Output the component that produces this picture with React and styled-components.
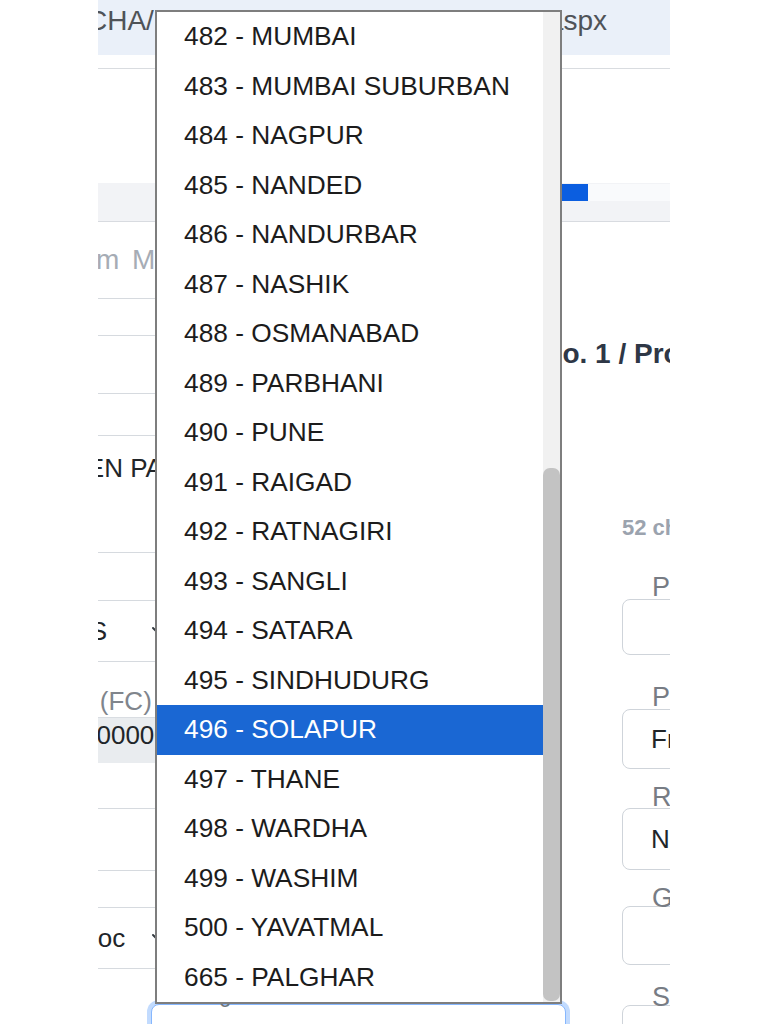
import styled, { createGlobalStyle } from 'styled-components'

const GlobalStyle = createGlobalStyle`
  html, body {
    margin: 0;
    padding: 0;
    background: #fff;
  }
  body {
    font-family: 'Liberation Sans', Arial, sans-serif;
  }
`

const districts = [
  ['482', 'MUMBAI'],
  ['483', 'MUMBAI SUBURBAN'],
  ['484', 'NAGPUR'],
  ['485', 'NANDED'],
  ['486', 'NANDURBAR'],
  ['487', 'NASHIK'],
  ['488', 'OSMANABAD'],
  ['489', 'PARBHANI'],
  ['490', 'PUNE'],
  ['491', 'RAIGAD'],
  ['492', 'RATNAGIRI'],
  ['493', 'SANGLI'],
  ['494', 'SATARA'],
  ['495', 'SINDHUDURG'],
  ['496', 'SOLAPUR'],
  ['497', 'THANE'],
  ['498', 'WARDHA'],
  ['499', 'WASHIM'],
  ['500', 'YAVATMAL'],
  ['665', 'PALGHAR'],
]

const fields = [
  { label: 'Pin Code', value: '', gap: 34, h: 56, lift: 0 },
  { label: 'Profile Type', value: 'Fresh', gap: 30, h: 60, lift: 0 },
  { label: 'Resident of State', value: 'No', gap: 16, h: 62, lift: -1 },
  { label: 'GSTIN', value: '', gap: 16, h: 59, lift: -4 },
  { label: 'State', value: '', gap: 20, h: 60, lift: -4 },
]

const Frame = styled.div`
  position: relative;
  width: 572px;
  height: 1024px;
  margin: 0 auto;
  overflow: hidden;
  background: #fff;
`

const AddressBar = styled.div`
  display: flex;
  justify-content: space-between;
  height: 55px;
  box-sizing: border-box;
  padding: 5px 63px 0 0;
  background: #eaf0f9;
  color: #4f5358;
  font-size: 28px;
  line-height: 32px;
  white-space: nowrap;
`

const UrlPart = styled.span`
  margin-left: ${p => p.$shift || 0}px;
`

const TopRule = styled.div`
  height: 14px;
  box-sizing: border-box;
  border-bottom: 1px solid #d9dce0;
`

const StepBar = styled.div`
  display: flex;
  height: 39px;
  margin-top: 114px;
  box-sizing: border-box;
  padding-top: 1px;
  background: #f2f3f6;
  border-bottom: 1px solid #d8dbe0;
`

const Track = styled.div`
  flex: 1;
  margin-left: 300px;
  height: 17px;
  background: #f9fafc;
`

const Fill = styled.div`
  height: 100%;
  background: #0b5ee0;
`

const Body = styled.div`
  display: grid;
  grid-template-columns: 420px 152px;
`

const LeftCol = styled.div`
  display: flex;
  flex-direction: column;
`

const Row = styled.div`
  display: flex;
  flex-direction: column;
  justify-content: ${p => (p.$top != null ? 'flex-start' : 'center')};
  height: ${p => p.$h}px;
  padding-top: ${p => p.$top || 0}px;
  box-sizing: border-box;
  border-bottom: 1px solid #d6dadf;
  white-space: nowrap;
`

const Title = styled.div`
  margin-left: ${p => p.$shift}px;
  font-size: 28px;
  line-height: 30px;
  word-spacing: 5px;
  color: #a6acb5;
`

const Heading = styled.div`
  padding-left: 284px;
  font-size: 28px;
  font-weight: 700;
  line-height: 30px;
  color: #2e3746;
`

const Value = styled.div`
  margin-left: ${p => p.$shift || 0}px;
  font-size: 26px;
  line-height: 30px;
  color: #212529;
`

const Caption = styled.div`
  margin-left: ${p => p.$shift || 0}px;
  font-size: 26px;
  line-height: 30px;
  color: #80858c;
`

const ReadonlyInput = styled.div`
  height: 46px;
  margin-top: 1px;
  padding-top: 2px;
  box-sizing: border-box;
  background: #e9ecef;
  border-top: 1px solid #d9dde2;
`

const SelectLine = styled.div`
  display: flex;
  align-items: center;
`

const SelectText = styled.div`
  width: 53px;
  flex: none;
  text-indent: ${p => p.$shift}px;
  font-size: 26px;
  line-height: 30px;
  color: #212529;
`

const OriginField = styled.div`
  margin: 14px 0 0 53px;
  width: 415px;
`

const OriginLabel = styled.div`
  padding-left: 39px;
  font-size: 22px;
  line-height: 24px;
  color: #6c757d;
`

const OriginBox = styled.div`
  height: 58px;
  margin-top: -3px;
  box-sizing: border-box;
  border: 1px solid #86b7fe;
  border-radius: 8px;
  background: #fff;
  box-shadow: 0 0 0 4px rgba(13, 110, 253, 0.25);
`

const RightCol = styled.div`
  display: flex;
  flex-direction: column;
  padding-left: 104px;
  white-space: nowrap;
`

const Counter = styled.div`
  margin-top: 293px;
  font-size: 22px;
  font-weight: 700;
  line-height: 26px;
  color: #9ba3ae;
`

const Field = styled.div`
  margin-top: ${p => p.$gap}px;
`

const FieldName = styled.div`
  padding-left: 30px;
  font-size: 27px;
  line-height: 24px;
  color: #777c84;
`

const InputBox = styled.div`
  display: flex;
  align-items: center;
  width: 180px;
  height: ${p => p.$h}px;
  margin-top: ${p => p.$lift}px;
  padding-left: 28px;
  box-sizing: border-box;
  border: 1.5px solid #cfd4da;
  border-radius: 8px;
  font-size: 26px;
  color: #212529;
`

const Popup = styled.div`
  position: absolute;
  top: 10px;
  left: 57px;
  z-index: 5;
  display: flex;
  width: 407px;
  height: 994px;
  box-sizing: border-box;
  border: 2px solid #7e7e7e;
  background: #fff;
`

const OptionList = styled.div`
  flex: 1;
  display: flex;
  flex-direction: column;
`

const Option = styled.div`
  display: flex;
  align-items: center;
  height: 49.5px;
  padding-left: 27px;
  font-size: 26.3px;
  white-space: nowrap;
  color: ${p => (p.$active ? '#fff' : '#1c1c1c')};
  background: ${p => (p.$active ? '#1a67d3' : 'transparent')};
`

const Scrollbar = styled.div`
  display: flex;
  flex-direction: column;
  width: 17px;
  background: #f1f1f1;
`

const Thumb = styled.div`
  flex: 1;
  margin: 456px 0 1px;
  border-radius: 7px;
  background: #c3c3c3;
`

function Chevron() {
  return (
    <svg width="16" height="12" viewBox="0 0 16 12" fill="none">
      <path d="M2 3l6 6 6-6" stroke="#343a40" strokeWidth="2" strokeLinecap="round" strokeLinejoin="round" />
    </svg>
  )
}

export default function App() {
  const progress = 70
  const selected = '496'

  return (
    <>
      <GlobalStyle />
      <Frame>
        <AddressBar>
          <UrlPart $shift={-11}>CHA/Forms</UrlPart>
          <UrlPart>Registration.aspx</UrlPart>
        </AddressBar>
        <TopRule />
        <StepBar>
          <Track>
            <Fill style={{ width: `${progress}%` }} />
          </Track>
        </StepBar>

        <Body>
          <LeftCol>
            <Row $h={77}>
              <Title $shift={-44}>Form Maharashtra</Title>
            </Row>
            <Row $h={37} />
            <Row $h={58} $top={3}>
              <Heading>Application No. 1 / Provisional</Heading>
            </Row>
            <Row $h={42} />
            <Row $h={117} $top={17}>
              <Value $shift={-56}>GIVEN PAN</Value>
            </Row>
            <Row $h={48} />
            <Row $h={61}>
              <SelectLine>
                <SelectText $shift={-43}>YES</SelectText>
                <Chevron />
              </SelectLine>
            </Row>
            <Row $h={147} $top={24}>
              <Caption $shift={-95}>Amount (FC)</Caption>
              <ReadonlyInput>
                <Value $shift={-16}>10000000</Value>
              </ReadonlyInput>
            </Row>
            <Row $h={62} />
            <Row $h={37} />
            <Row $h={61}>
              <SelectLine>
                <SelectText $shift={-19}>Doc</SelectText>
                <Chevron />
              </SelectLine>
            </Row>
            <OriginField>
              <OriginLabel>Origin District</OriginLabel>
              <OriginBox />
            </OriginField>
          </LeftCol>

          <RightCol>
            <Counter>52 characters</Counter>
            {fields.map(f => (
              <Field key={f.label} $gap={f.gap}>
                <FieldName>{f.label}</FieldName>
                <InputBox $h={f.h} $lift={f.lift}>
                  {f.value}
                </InputBox>
              </Field>
            ))}
          </RightCol>
        </Body>

        <Popup>
          <OptionList>
            {districts.map(([code, name]) => (
              <Option key={code} $active={code === selected}>
                {code} - {name}
              </Option>
            ))}
          </OptionList>
          <Scrollbar>
            <Thumb />
          </Scrollbar>
        </Popup>
      </Frame>
    </>
  )
}
